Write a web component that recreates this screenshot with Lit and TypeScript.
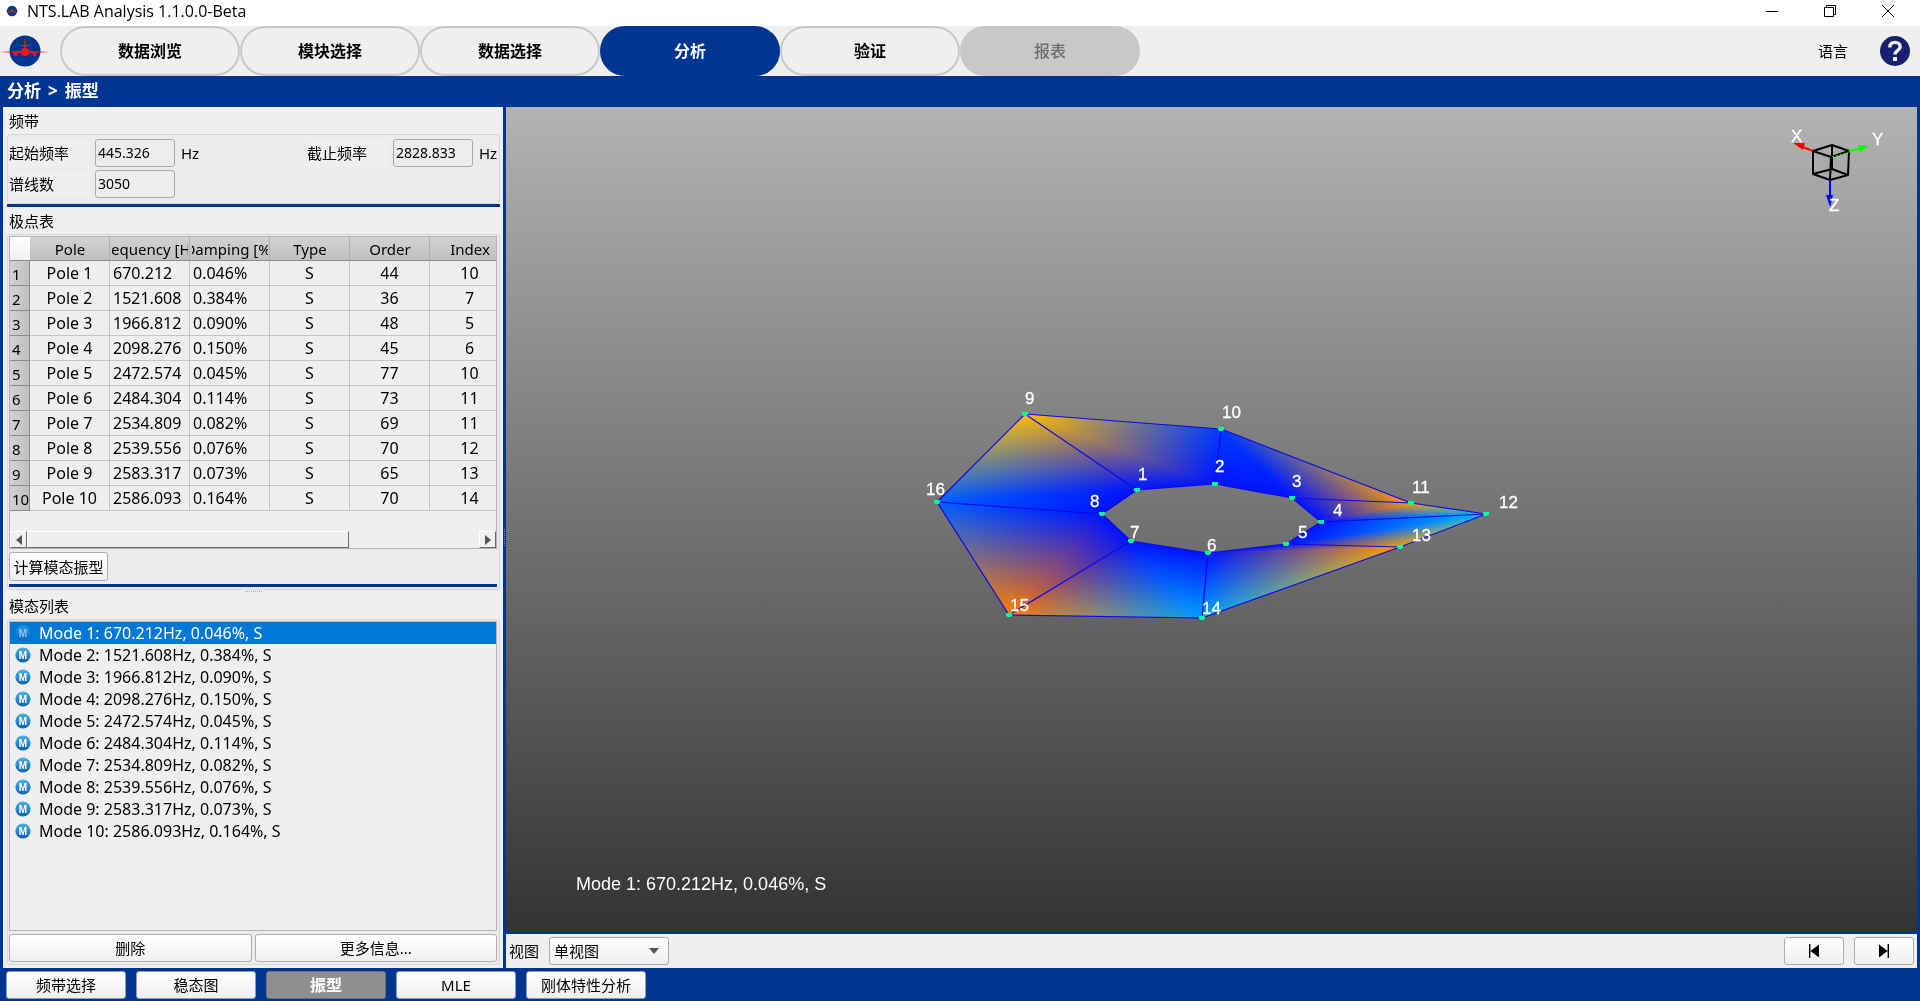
import { LitElement, html, svg, css } from "lit";
import { customElement, state } from "lit/decorators.js";
import { classMap } from "lit/directives/class-map.js";

type Rgb = [number, number, number];
interface Node3 { id: number; x: number; y: number; lx: number; ly: number; c: Rgb; }

const poles = [
  ["670.212", "0.046%", 44, 10],
  ["1521.608", "0.384%", 36, 7],
  ["1966.812", "0.090%", 48, 5],
  ["2098.276", "0.150%", 45, 6],
  ["2472.574", "0.045%", 77, 10],
  ["2484.304", "0.114%", 73, 11],
  ["2534.809", "0.082%", 69, 11],
  ["2539.556", "0.076%", 70, 12],
  ["2583.317", "0.073%", 65, 13],
  ["2586.093", "0.164%", 70, 14],
].map(([f, d, o, i], n) => ({ n: n + 1, freq: f, damping: d, type: "S", order: o, index: i }));

const modeText = (p: (typeof poles)[number]) => `Mode ${p.n}: ${p.freq}Hz, ${p.damping}, ${p.type}`;

const inner: Rgb = [0, 20, 255];
const nodes: Node3[] = [
  { id: 1, x: 631, y: 383, lx: 632, ly: 373, c: inner },
  { id: 2, x: 709, y: 377, lx: 709, ly: 365, c: inner },
  { id: 3, x: 786, y: 391, lx: 786, ly: 380, c: inner },
  { id: 4, x: 815, y: 415, lx: 827, ly: 409, c: inner },
  { id: 5, x: 780, y: 437, lx: 792, ly: 431, c: inner },
  { id: 6, x: 702, y: 446, lx: 701, ly: 444, c: inner },
  { id: 7, x: 625, y: 434, lx: 624, ly: 431, c: inner },
  { id: 8, x: 596, y: 407, lx: 584, ly: 400, c: inner },
  { id: 9, x: 519, y: 307, lx: 519, ly: 297, c: [255, 190, 0] },
  { id: 10, x: 715, y: 322, lx: 716, ly: 311, c: [0, 60, 255] },
  { id: 11, x: 905, y: 396, lx: 906, ly: 386, c: [255, 155, 0] },
  { id: 12, x: 980, y: 407, lx: 993, ly: 401, c: [0, 185, 255] },
  { id: 13, x: 894, y: 440, lx: 906, ly: 434, c: [255, 155, 0] },
  { id: 14, x: 696, y: 511, lx: 696, ly: 507, c: [0, 160, 255] },
  { id: 15, x: 503, y: 508, lx: 504, ly: 504, c: [255, 125, 0] },
  { id: 16, x: 431, y: 395, lx: 420, ly: 388, c: [0, 95, 255] },
];

const triangles = [
  [9, 10, 2], [9, 2, 1], [10, 11, 3], [10, 3, 2], [3, 11, 4], [4, 11, 12],
  [5, 4, 12], [5, 12, 13], [6, 5, 13], [6, 13, 14], [7, 6, 14], [7, 14, 15],
  [8, 7, 15], [8, 15, 16], [16, 1, 8], [16, 9, 1],
];

const edges = [
  [9, 10], [10, 11], [11, 12], [12, 13], [13, 14], [14, 15], [15, 16], [16, 9],
  [1, 2], [2, 3], [3, 4], [4, 5], [5, 6], [6, 7], [7, 8], [8, 1],
  [9, 1], [10, 2], [11, 3], [12, 4], [13, 5], [14, 6], [15, 7], [16, 8],
];

const node = (id: number) => nodes[id - 1];

/* One colour ramp per triangle corner: opaque at the corner, clear at the opposite edge. */
const ramp = (t: number[], k: number) => {
  const a = node(t[k]), b = node(t[(k + 1) % 3]), c = node(t[(k + 2) % 3]);
  const dx = c.x - b.x, dy = c.y - b.y;
  const s = ((a.x - b.x) * dx + (a.y - b.y) * dy) / (dx * dx + dy * dy);
  const id = `ramp-${t.join("-")}-${k}`;
  const fill = `rgb(${a.c.join(",")})`;
  return svg`
    <linearGradient id=${id} gradientUnits="userSpaceOnUse" x1=${a.x} y1=${a.y} x2=${b.x + s * dx} y2=${b.y + s * dy}>
      <stop offset="0" stop-color=${fill} stop-opacity="1"></stop>
      <stop offset="1" stop-color=${fill} stop-opacity="0"></stop>
    </linearGradient>
    <polygon class="facet" points="${a.x},${a.y} ${b.x},${b.y} ${c.x},${c.y}" fill="url(#${id})"></polygon>`;
};

const logo = svg`
  <circle cx="25" cy="25" r="15.5" fill="#003592"></circle>
  <g fill="#f01414">
    <path d="M0 26 L20 25 H30 L50 26 L30 27 H20 Z"></path>
    <path d="M24.5 12 H25.5 L26 22 H24 Z"></path>
    <path d="M17 19.5 L25 18.8 L33 19.5 L25 20.2 Z"></path>
    <circle cx="25" cy="26" r="4.4"></circle>
    <circle cx="15.5" cy="28" r="2"></circle>
    <circle cx="34.5" cy="28" r="2"></circle>
  </g>`;

@customElement("mode-viewport")
class ModeViewport extends LitElement {
  static properties = { caption: {} };
  declare caption: string;

  static styles = css`
    :host {
      display: block;
      position: relative;
      flex: 1;
      min-height: 0;
      background: linear-gradient(#b3b3b3, #333333);
      overflow: hidden;
      font-family: "Liberation Sans", Arial, sans-serif;
    }
    .scene { position: absolute; inset: 0; width: 100%; height: 100%; }
    .axes { position: absolute; top: 16px; right: 29px; width: 116px; height: 96px; }
    .mesh { isolation: isolate; }
    .facet { mix-blend-mode: plus-lighter; shape-rendering: crispEdges; }
    .edge { stroke: #0a0ae6; stroke-width: 1.2; }
    .label { fill: #fff; stroke: #fff; stroke-width: 0.3; font-size: 17px; }
    .caption { position: absolute; left: 70px; bottom: 37px; color: #fff; font-size: 18px; line-height: 20px; }
  `;

  render() {
    return html`
      <svg class="scene" viewBox="0 0 1411 824" aria-label="振型">
        <g class="mesh">${triangles.map((t) => [0, 1, 2].map((k) => ramp(t, k)))}</g>
        ${edges.map(([a, b]) => svg`<line class="edge" x1=${node(a).x} y1=${node(a).y} x2=${node(b).x} y2=${node(b).y}></line>`)}
        ${nodes.map((n) => svg`<path d="M${n.x - 3} ${n.y - 2} h6 v3 h-1 v1 h-4 v-1 h-1 z" fill="#00ff96"></path>`)}
        ${nodes.map((n) => svg`<text class="label" x=${n.lx} y=${n.ly}>${n.id}</text>`)}
      </svg>
      <svg class="axes" viewBox="0 0 116 96">
        <g fill="none" stroke="#000" stroke-width="2" stroke-linejoin="round">
          <path d="M41 28 L60 22 L77 28 L76 52 L58 57 L41 51 Z"></path>
          <path d="M41 28 L59 34 L77 28 M59 34 L58 57"></path>
          <path d="M60 22 V46 M41 51 L60 46 L76 52"></path>
        </g>
        <path d="M28 23 L41 28" stroke="#f00" stroke-width="2"></path>
        <path d="M21 20 L33 20 L31 27 Z" fill="#f00"></path>
        <path d="M77 28 L90 25" stroke="#0f0" stroke-width="2"></path>
        <path d="M60 34 L77 29" stroke="#0f0" stroke-width="1" stroke-dasharray="2 2"></path>
        <path d="M97 23 L86 22 L88 29 Z" fill="#0f0"></path>
        <path d="M58 57 V75" stroke="#00f" stroke-width="2"></path>
        <path d="M54 72 H61 L58 84 Z" fill="#00f"></path>
        <text class="label" x="19" y="19">X</text>
        <text class="label" x="100" y="22">Y</text>
        <text class="label" x="57" y="88">Z</text>
      </svg>
      <div class="caption">${this.caption}</div>`;
  }
}

@customElement("app-root")
class AppRoot extends LitElement {
  @state() private selected = 1;
  @state() private tab = "分析";
  @state() private page = "振型";

  static styles = css`
    :host {
      display: flex;
      flex-direction: column;
      height: 100vh;
      overflow: hidden;
      background: #003592;
      color: #000;
      font-family: "Noto Sans", "Noto Sans CJK SC", sans-serif;
      font-size: 15px;
      line-height: 20px;
    }
    * { box-sizing: border-box; }
    button, input, select { font: inherit; color: inherit; margin: 0; }
    button { padding: 0; white-space: nowrap; }

    .titlebar { display: flex; align-items: center; height: 26px; flex: none; padding: 0 3px 4px 5px; background: #fff; }
    .titlebar .mark { width: 14px; height: 14px; flex: none; }
    .title { flex: 1; margin: 0 0 0 8px; font-size: 16px; font-weight: 400; font-family: "Open Sans", "Noto Sans", sans-serif; }
    .win { display: grid; place-items: center; width: 58px; height: 22px; border: 0; background: none; }
    .win svg { width: 14px; height: 14px; fill: none; stroke: #000; stroke-width: 1; }

    .header { display: flex; align-items: center; height: 50px; flex: none; padding-right: 10px; background: #efefef; }
    .header .mark { width: 50px; height: 50px; flex: none; margin-right: 10px; }
    .tab { width: 180px; height: 50px; border: 2px solid #c8c8c8; border-radius: 25px; background: #efefef; font-size: 16px; font-weight: 700; }
    .tab.active { background: #003592; border-color: #003592; color: #fff; }
    .tab:disabled { background: #c8c8c8; color: #6e6e6e; font-weight: 500; }
    .language { margin: 0 32px 0 auto; border: 0; background: none; font-size: 15px; }
    .help { width: 30px; height: 30px; border: 0; background: none; }
    .help svg { display: block; }

    .crumbs { display: flex; gap: 7px; flex: none; height: 31px; padding: 0 7px; color: #fff; font-size: 17px; font-weight: 700; line-height: 30px; }

    .main { display: flex; flex: 1; min-height: 0; padding: 0 3px; }
    .side { display: flex; flex-direction: column; width: 500px; flex: none; padding: 0 3px 3px 4px; background: #efefef; }
    .splitter { display: grid; place-items: center; width: 3px; flex: none; }
    .splitter span { height: 17px; border-left: 1px dotted #6f8cc4; }
    h2 { flex: none; height: 27px; margin: 0; padding-left: 2px; font-size: 15px; font-weight: 400; line-height: 29px; }
    .box { border: 1px solid #d6d6d6; border-radius: 3px; background: #ececec; }
    .rule { height: 3px; flex: none; background: #003592; }

    .band { display: grid; grid-template-columns: 86px 80px 1fr 86px 80px 26px; align-content: start; gap: 3px 0; padding: 4px 0 2px 1px; height: 70px; flex: none; line-height: 28px; }
    .band label { height: 28px; margin-right: 6px; background: #efefef; }
    .band input { width: 80px; height: 28px; padding: 0 2px; border: 1px solid #a9a9a9; border-radius: 3px; background: #ededed; font-size: 14px; }
    .unit { padding-left: 6px; }

    .poles { flex: none; padding: 1px 2px 2px 1px; }
    .grid { border: 1px solid #b4b4b4; background: #efefef; overflow: hidden; height: 313px; display: flex; flex-direction: column; }
    .clip { flex: 1; overflow: hidden; }
    table { width: 500px; table-layout: fixed; border-collapse: separate; border-spacing: 0; }
    th, td { height: 25px; padding: 0; border: 0 solid #c4c4c4; border-width: 0 1px 1px 0; font-weight: 400; text-align: center; line-height: 22px; overflow: hidden; white-space: nowrap; }
    tbody td { font-size: 16px; }
    thead th { height: 24px; background: linear-gradient(#d2d2d2, #c0c0c0); border-right-color: #b0b0b0; border-bottom-color: #8c8c8c; }
    thead td { background: linear-gradient(#fff, #f0f0f0); border-right: 0; border-bottom-color: #8c8c8c; width: 20px; height: 24px; }
    tbody th { background: linear-gradient(90deg, #d2d2d2, #c0c0c0); border-color: #8c8c8c; text-align: left; padding: 2px 0 0 2px; line-height: 20px; }
    .head { display: flex; justify-content: center; overflow: hidden; margin: 0 1px 0 2px; }
    td.left { text-align: left; padding-left: 3px; }

    .scroll { display: flex; height: 17px; flex: none; }
    .scroll button { width: 17px; border: 1px solid #fff; border-right: 1px solid #696969; border-bottom: 1px solid #696969; background: #efefef; display: grid; place-items: center; }
    .thumb { width: 322px; border: 1px solid #fff; border-right-color: #696969; border-bottom-color: #696969; background: #efefef; margin-right: auto; }

    .btn { border: 1px solid #adadad; border-radius: 3px; background: linear-gradient(#fff, #efefef); height: 28px; }
    .calc { width: 99px; height: 29px; margin: 3px 0; display: block; }
    .grip { height: 2px; width: 17px; flex: none; margin: 0 auto; border-bottom: 1px dotted #aaa; }

    .modes { flex: 1; min-height: 0; display: flex; flex-direction: column; gap: 3px; padding: 1px 2px 2px 1px; }
    .list { flex: 1; min-height: 0; margin: 0; padding: 0; list-style: none; border: 1px solid #b4b4b4; background: #efefef; overflow: hidden; }
    .mode { display: flex; align-items: center; gap: 8px; width: 100%; height: 22px; padding: 0 5px; border: 0; background: none; text-align: left; font-size: 16px; }
    .mode.active { background: #0078d7; color: #fff; }
    .mode svg { width: 16px; height: 16px; flex: none; }
    .mode.active svg { opacity: 0.55; }
    .m { fill: #fff; font: 700 10px "Liberation Sans", sans-serif; text-anchor: middle; }
    .pair { display: grid; grid-template-columns: 1fr 1fr; gap: 3px; }

    .view { display: flex; flex-direction: column; flex: 1; min-width: 0; }
    .toolbar { display: flex; align-items: center; height: 34px; flex: none; margin-top: 3px; padding: 0 3px; background: #efefef; }
    .toolbar label { margin-right: 10px; }
    .pick { position: relative; margin-right: auto; }
    .pick select { width: 120px; height: 28px; padding: 0 4px; appearance: none; border: 1px solid #adadad; border-radius: 3px; background: linear-gradient(#fff, #efefef); display: block; }
    .pick svg { position: absolute; right: 10px; top: 11px; pointer-events: none; }
    .step { width: 60px; margin-left: 10px; display: grid; place-items: center; }

    .footer { display: flex; gap: 10px; flex: none; height: 33px; padding: 3px 6px; }
    .footer .btn { width: 120px; border-color: #8e9bb5; }
    .footer .active { background: #8f8f8f; border-color: #6f6f6f; color: #fff; font-weight: 700; font-size: 16px; }
  `;

  private step(by: number) {
    this.selected = Math.min(poles.length, Math.max(1, this.selected + by));
  }

  render() {
    return html`
      <div class="titlebar">
        <svg class="mark" viewBox="4 4 42 42">${logo}</svg>
        <h1 class="title">NTS.LAB Analysis 1.1.0.0-Beta</h1>
        <button class="win" aria-label="最小化"><svg viewBox="0 0 14 14"><path d="M1 7.5 H13"></path></svg></button>
        <button class="win" aria-label="还原"><svg viewBox="0 0 14 14"><path d="M1.5 3.5 H10.5 V12.5 H1.5 Z M3.5 3.5 V1.5 H12.5 V10.5 H10.5"></path></svg></button>
        <button class="win" aria-label="关闭"><svg viewBox="0 0 14 14"><path d="M1 1 L13 13 M13 1 L1 13"></path></svg></button>
      </div>

      <div class="header">
        <svg class="mark" viewBox="0 0 50 50">${logo}</svg>
        ${["数据浏览", "模块选择", "数据选择", "分析", "验证", "报表"].map((t) => html`
          <button class=${classMap({ tab: true, active: t === this.tab })} ?disabled=${t === "报表"} @click=${() => (this.tab = t)}>${t}</button>`)}
        <button class="language">语言</button>
        <button class="help" aria-label="帮助">
          <svg width="30" height="30" viewBox="0 0 30 30">
            <circle cx="15" cy="15" r="15" fill="#152070"></circle>
            <path d="M9.8 11.6 C9.8 8 12 6.4 15 6.4 C18.2 6.4 20.2 8.2 20.2 10.8 C20.2 14.4 15 14.4 15 18.6" fill="none" stroke="#efefef" stroke-width="3.4"></path>
            <rect x="13" y="21" width="4" height="4" fill="#efefef"></rect>
          </svg>
        </button>
      </div>

      <nav class="crumbs"><span>分析</span><span>&gt;</span><span>振型</span></nav>

      <div class="main">
        <section class="side">
          <h2>频带</h2>
          <div class="box band">
            <label for="start">起始频率</label>
            <input id="start" readonly value="445.326">
            <span class="unit">Hz</span>
            <label for="end">截止频率</label>
            <input id="end" readonly value="2828.833">
            <span class="unit">Hz</span>
            <label for="lines">谱线数</label>
            <input id="lines" readonly value="3050">
          </div>
          <div class="rule"></div>
          <h2>极点表</h2>
          <div class="box poles">
            <div class="grid">
              <div class="clip">
                <table>
                  <thead>
                    <tr>
                      <td></td>
                      ${["Pole", "Frequency [Hz]", "Damping [%]", "Type", "Order", "Index"].map((h) => html`<th scope="col"><div class="head">${h}</div></th>`)}
                    </tr>
                  </thead>
                  <tbody>
                    ${poles.map((p) => html`
                      <tr>
                        <th scope="row">${p.n}</th>
                        <td>Pole ${p.n}</td>
                        <td class="left">${p.freq}</td>
                        <td class="left">${p.damping}</td>
                        <td>${p.type}</td>
                        <td>${p.order}</td>
                        <td>${p.index}</td>
                      </tr>`)}
                  </tbody>
                </table>
              </div>
              <div class="scroll">
                <button aria-label="向左"><svg width="6" height="10" viewBox="0 0 6 10"><path d="M6 0 V10 L0 5 Z" fill="#555"></path></svg></button>
                <div class="thumb"></div>
                <button aria-label="向右"><svg width="6" height="10" viewBox="0 0 6 10"><path d="M0 0 V10 L6 5 Z" fill="#555"></path></svg></button>
              </div>
            </div>
            <button class="btn calc">计算模态振型</button>
            <div class="rule"></div>
          </div>
          <div class="grip"></div>
          <h2>模态列表</h2>
          <div class="box modes">
            <ul class="list">
              ${poles.map((p) => html`
                <li>
                  <button class=${classMap({ mode: true, active: p.n === this.selected })} @click=${() => (this.selected = p.n)}>
                    <svg viewBox="0 0 16 16">
                      <defs><linearGradient id="ball" x1="0" y1="0" x2="0" y2="1"><stop offset="0" stop-color="#45b4ec"></stop><stop offset="1" stop-color="#0f62b0"></stop></linearGradient></defs>
                      <circle cx="8" cy="8" r="7.6" fill="url(#ball)"></circle>
                      <text class="m" x="8" y="11.5">M</text>
                    </svg>
                    <span>${modeText(p)}</span>
                  </button>
                </li>`)}
            </ul>
            <div class="pair">
              <button class="btn">删除</button>
              <button class="btn">更多信息...</button>
            </div>
          </div>
        </section>

        <div class="splitter"><span></span></div>

        <section class="view">
          <mode-viewport .caption=${modeText(poles[this.selected - 1])}></mode-viewport>
          <div class="toolbar">
            <label for="layout">视图</label>
            <div class="pick">
              <select id="layout"><option>单视图</option></select>
              <svg width="10" height="6" viewBox="0 0 10 6"><path d="M0 0 H10 L5 6 Z" fill="#555"></path></svg>
            </div>
            <button class="btn step" aria-label="上一个" @click=${() => this.step(-1)}>
              <svg width="12" height="14" viewBox="0 0 12 14"><path d="M1 0 H2.4 V14 H1 Z M11 0.5 V13.5 L2.4 7 Z"></path></svg>
            </button>
            <button class="btn step" aria-label="下一个" @click=${() => this.step(1)}>
              <svg width="12" height="14" viewBox="0 0 12 14"><path d="M9.6 0 H11 V14 H9.6 Z M1 0.5 V13.5 L9.6 7 Z"></path></svg>
            </button>
          </div>
        </section>
      </div>

      <nav class="footer">
        ${["频带选择", "稳态图", "振型", "MLE", "刚体特性分析"].map((t) => html`
          <button class=${classMap({ btn: true, active: t === this.page })} @click=${() => (this.page = t)}>${t}</button>`)}
      </nav>`;
  }
}
